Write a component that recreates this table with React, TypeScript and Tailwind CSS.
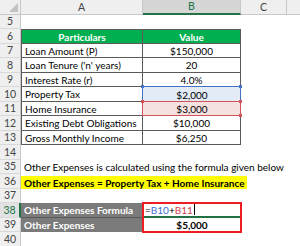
import React from "react";

function RH({ n, sel }: { n: number; sel?: boolean }) {
  return (
    <div
      className={
        sel
          ? "w-[21px] shrink-0 flex items-center justify-center border-b border-b-[#d9d9d9] border-r-2 border-r-[#217346] bg-[#e1e1e1] text-[#217346] text-[10.5px]"
          : "w-[21px] shrink-0 flex items-center justify-center border-b border-b-[#d9d9d9] border-r border-r-[#c8c8c8] bg-[#efefef] text-[#444] text-[10.5px]"
      }
    >
      {n}
    </div>
  );
}

const B = "border-[#5a5a5a]";

export default function App() {
  return (
    <div className="relative w-[300px] h-[246px] overflow-hidden bg-white font-[family-name:Lato,sans-serif] text-[10px] text-black leading-none">
      {/* Column header row */}
      <div className="flex h-[15px] bg-[#efefef] text-[#444] text-[10.5px]">
        <div className="w-[21px] shrink-0 relative border-r border-b border-[#c8c8c8]">
          <svg className="absolute right-[2px] bottom-[2px]" width="9" height="9" viewBox="0 0 9 9">
            <polygon points="9,0 9,9 0,9" fill="#c2c2c2" />
          </svg>
        </div>
        <div className="w-[122px] shrink-0 flex items-center justify-center border-r border-b border-[#c8c8c8]">A</div>
        <div className="w-[98px] shrink-0 flex items-center justify-center border-r border-r-[#c8c8c8] border-b-2 border-b-[#217346] bg-[#d6d6d6] text-[#217346]">B</div>
        <div className="w-[46px] shrink-0 flex items-center justify-center border-r border-b border-[#c8c8c8]">C</div>
        <div className="flex-1 border-b border-[#c8c8c8]"></div>
      </div>

      {/* Row 5 */}
      <div className="flex h-[14px]">
        <RH n={5} />
      </div>
      {/* Row 6 */}
      <div className="flex h-[15px]">
        <RH n={6} />
        <div className={`w-[122px] shrink-0 flex items-center justify-center bg-[#00b050] text-white font-bold border ${B}`}>Particulars</div>
        <div className={`w-[98px] shrink-0 flex items-center justify-center bg-[#00b050] text-white font-bold border-t border-r border-b ${B}`}>Value</div>
      </div>
      {/* Row 7 */}
      <div className="flex h-[14px]">
        <RH n={7} />
        <div className={`w-[122px] shrink-0 flex items-center pl-[3px] border-l border-r border-b ${B}`}>Loan Amount (P)</div>
        <div className={`w-[98px] shrink-0 flex items-center justify-center border-r border-b ${B}`}>$150,000</div>
      </div>
      {/* Row 8 */}
      <div className="flex h-[15px]">
        <RH n={8} />
        <div className={`w-[122px] shrink-0 flex items-center pl-[3px] border-l border-r border-b ${B}`}>Loan Tenure ('n' years)</div>
        <div className={`w-[98px] shrink-0 flex items-center justify-center border-r border-b ${B}`}>20</div>
      </div>
      {/* Row 9 */}
      <div className="flex h-[14px]">
        <RH n={9} />
        <div className={`w-[122px] shrink-0 flex items-center pl-[3px] border-l border-r border-b ${B}`}>Interest Rate (r)</div>
        <div className={`w-[98px] shrink-0 flex items-center justify-center border-r border-b ${B}`}>4.0%</div>
      </div>
      {/* Row 10 */}
      <div className="flex h-[15px]">
        <RH n={10} />
        <div className={`w-[122px] shrink-0 flex items-center pl-[3px] border-l border-r border-b ${B}`}>Property Tax</div>
        <div className="w-[98px] shrink-0 relative flex items-center justify-center bg-[#e3ebf7]">
          <div className="absolute -top-px -left-px right-0 bottom-0 border border-[#4472c4]"></div>
          <div className="absolute -top-[2px] -left-[2px] w-[3px] h-[3px] bg-[#4472c4]"></div>
          <div className="absolute -top-[2px] -right-[1px] w-[3px] h-[3px] bg-[#4472c4]"></div>
          <span className="relative">$2,000</span>
        </div>
      </div>
      {/* Row 11 */}
      <div className="flex h-[14px]">
        <RH n={11} />
        <div className={`w-[122px] shrink-0 flex items-center pl-[3px] border-l border-r border-b ${B}`}>Home Insurance</div>
        <div className="w-[98px] shrink-0 relative flex items-center justify-center bg-[#f6e1e1]">
          <div className="absolute -top-px -left-px right-0 bottom-0 border border-[#d0545a]"></div>
          <div className="absolute -top-[2px] -left-[2px] w-[3px] h-[3px] bg-[#d0545a]"></div>
          <div className="absolute -top-[2px] -right-[1px] w-[3px] h-[3px] bg-[#d0545a]"></div>
          <div className="absolute -bottom-[1px] -right-[1px] w-[3px] h-[3px] bg-[#d0545a]"></div>
          <span className="relative">$3,000</span>
        </div>
      </div>
      {/* Row 12 */}
      <div className="flex h-[15px]">
        <RH n={12} />
        <div className={`w-[122px] shrink-0 flex items-center pl-[3px] border-l border-r border-b ${B}`}>Existing Debt Obligations</div>
        <div className={`w-[98px] shrink-0 flex items-center justify-center border-r border-b ${B}`}>$10,000</div>
      </div>
      {/* Row 13 */}
      <div className="flex h-[14px]">
        <RH n={13} />
        <div className={`w-[122px] shrink-0 flex items-center pl-[3px] border-l border-r border-b ${B}`}>Gross Monthly Income</div>
        <div className={`w-[98px] shrink-0 flex items-center justify-center border-r border-b ${B}`}>$6,250</div>
      </div>
      {/* Row 14 */}
      <div className="flex h-[15px]">
        <RH n={14} />
      </div>
      {/* Row 35 */}
      <div className="flex h-[14px]">
        <RH n={35} />
        <div className="flex items-center pl-[3px] whitespace-nowrap">Other Expenses is calculated using the formula given below</div>
      </div>
      {/* Row 36 */}
      <div className="flex h-[15px]">
        <RH n={36} />
        <div className="flex items-stretch pt-[2px]">
          <div className="flex items-center pl-[3px] pr-[2px] bg-[#ffff00] font-bold whitespace-nowrap">Other Expenses = Property Tax + Home Insurance</div>
        </div>
      </div>
      {/* Row 37 */}
      <div className="flex h-[14px]">
        <RH n={37} />
      </div>
      {/* Row 38 */}
      <div className="flex h-[15px]">
        <RH n={38} sel />
        <div className="w-[122px] shrink-0 flex items-center pl-[3px] bg-[#7b7b7b] text-white font-bold border-b border-[#5a5a5a]">Other Expenses Formula</div>
        <div className="w-[98px] shrink-0 relative flex items-center pl-[2px] border-b-2 border-[#217346]">
          <span>=</span>
          <span className="text-[#3b6fd4]">B10</span>
          <span>+</span>
          <span className="text-[#d0404c]">B11</span>
          <span className="ml-[1px] w-px h-[11px] bg-black"></span>
        </div>
      </div>
      {/* Row 39 */}
      <div className="flex h-[14px]">
        <RH n={39} />
        <div className="w-[122px] shrink-0 flex items-center pl-[3px] bg-[#7b7b7b] text-white font-bold">Other Expenses</div>
        <div className="w-[98px] shrink-0 flex items-center justify-center font-bold">$5,000</div>
      </div>
      {/* Row 40 */}
      <div className="flex h-[15px]">
        <RH n={40} />
      </div>

      {/* Red highlight box over B38:B39 */}
      <div className="absolute left-[142px] top-[202px] w-[100px] h-[31px] border-2 border-[#ee1c25]"></div>
    </div>
  );
}
